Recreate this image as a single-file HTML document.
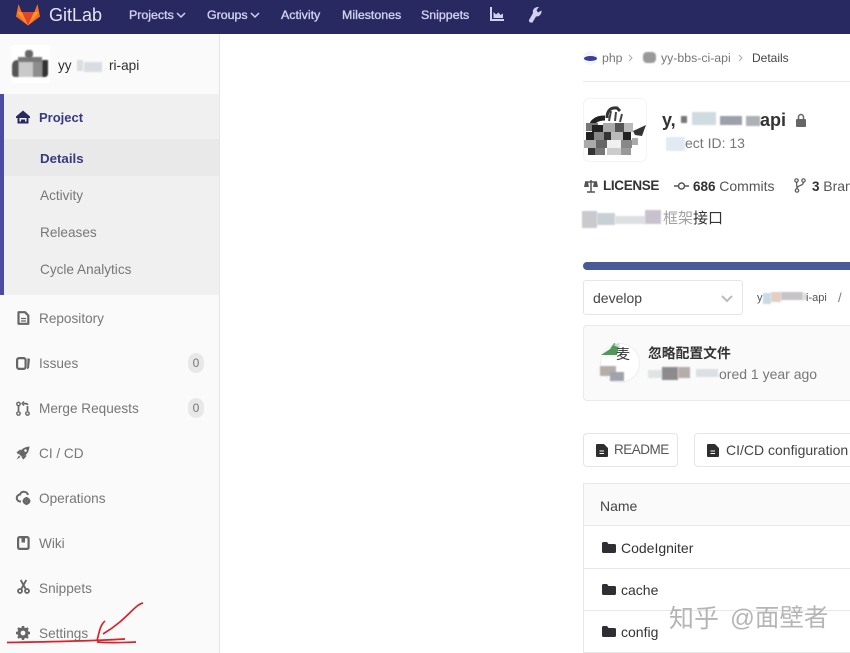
<!DOCTYPE html>
<html><head><meta charset="utf-8"><style>
html,body{margin:0;padding:0;background:#fff}
body{width:850px;height:653px;overflow:hidden;position:relative;font-family:"Liberation Sans","Noto Sans CJK SC",sans-serif;color:#2e2e2e}
.t{position:absolute;white-space:nowrap;line-height:18px;font-size:13.6px}
.b{position:absolute}
.p{position:absolute;filter:blur(.8px)}
.s{color:#777;margin-top:1px}
.n{color:#d1d1f0;font-size:12.400px;top:6px;-webkit-text-stroke:.35px #d1d1f0}
svg{position:absolute;overflow:visible}
</style></head><body>
<div class="b" style="left:0;top:0;width:850px;height:34px;background:#292961"></div>
<svg style="left:15px;top:2px" width="26" height="24" viewBox="0 0 26 24"><path d="M13 23.500 L1 14.500 L3.500 2 L7 11 H19 L22.500 2 L25 14.500Z" fill="#fc6d26"/><path d="M13 23.500L7 10H19Z" fill="#e24329"/><path d="M13 23.500L7 10H2Z M13 23.500L19 10H24Z" fill="#fca326" opacity=".75"/></svg>
<div class="t" style="left:49px;top:5px;font-size:18px;line-height:20px;color:#e4e4f6">GitLab</div>
<div class="t n" style="left:129px">Projects</div>
<svg style="left:176px;top:11px" width="10" height="8"><path d="M1 2l4 4 4-4" fill="none" stroke="#d1d1f0" stroke-width="1.500"/></svg>
<div class="t n" style="left:207px">Groups</div>
<svg style="left:250px;top:11px" width="10" height="8"><path d="M1 2l4 4 4-4" fill="none" stroke="#d1d1f0" stroke-width="1.500"/></svg>
<div class="t n" style="left:281px">Activity</div>
<div class="t n" style="left:342px">Milestones</div>
<div class="t n" style="left:421px">Snippets</div>
<svg style="left:490px;top:7px" width="14" height="14"><path d="M1 0V13H14" fill="none" stroke="#d1d1f0" stroke-width="2"/><path d="M3.500 11V5L6 7.500 8.500 5.500 10.500 8 13 6.500V11Z" fill="#d1d1f0"/></svg>
<svg style="left:528px;top:6px" width="14" height="17"><path d="M1 14L5 7C4 3.500 7 .5 11 1L8.500 4 10 6.500 13.500 4.500C14 8 11 11 8 10.500L4.500 16.500Q3 17 1.500 16Q.5 15 1 14Z" fill="#d1d1f0"/></svg>

<div class="b" style="left:0;top:34px;width:219px;height:619px;background:#fafafa;border-right:1px solid #e5e5e5"></div>
<div class="b" style="left:0;top:94px;width:219px;height:201px;background:#f0f0f0"></div>
<div class="b" style="left:0;top:94px;width:4px;height:201px;background:#4b4ba3"></div>
<div class="b" style="left:4px;top:139px;width:215px;height:37px;background:#e9e9e9"></div>

<div class="b" style="left:11px;top:45px;width:39px;height:38px;background:#fff;border-radius:3px"></div>
<div class="p" style="left:12px;top:60px;width:36px;height:17px;border-radius:5px 0 3px 3px;background:linear-gradient(90deg,#555 0 18%,#c9c9c9 18% 58%,#8d8d8d 58% 85%,#333 85%)"></div>
<div class="p" style="left:18px;top:57px;width:24px;height:5px;background:#777"></div>
<div class="p" style="left:25px;top:50px;width:8px;height:8px;background:#666;border-radius:3px"></div>
<div class="t" style="left:58px;top:57px;color:#2e2e2e">yy</div>
<div class="p" style="left:77px;top:60px;width:6px;height:11px;background:#ddd"></div>
<div class="p" style="left:84px;top:62px;width:18px;height:10px;background:#d8dde2"></div>
<div class="t" style="left:109px;top:57px;color:#2e2e2e">ri-api</div>

<svg style="left:16px;top:110px" width="14" height="14"><path d="M7 .5L0 6.500V8H14V6.500Z" fill="#292961"/><path d="M2.500 7V12.500H11.500V7" fill="none" stroke="#292961" stroke-width="2"/><rect x="5" y="9.500" width="4" height="2" fill="#292961"/></svg>
<div class="t" style="left:39px;top:109px;font-weight:bold;font-size:13px;color:#393982">Project</div>
<div class="t" style="left:40px;top:150px;font-weight:bold;font-size:13.300px;color:#393982">Details</div>
<div class="t s" style="left:40px;top:186px">Activity</div>
<div class="t s" style="left:40px;top:223px">Releases</div>
<div class="t s" style="left:40px;top:260px">Cycle Analytics</div>

<svg style="left:17px;top:311px" width="13" height="14"><path d="M1.500 1.200H8L11.300 4.500V12.800H1.500Z" fill="none" stroke="#666" stroke-width="2.200" stroke-linejoin="round"/><path d="M4 7.500h5M4 10h5" stroke="#666" stroke-width="1.300"/></svg>
<div class="t s" style="left:39px;top:309px">Repository</div>
<svg style="left:16px;top:357px" width="14" height="13"><rect x="1.100" y="1.100" width="8.500" height="10.800" rx="2" fill="none" stroke="#666" stroke-width="2.200"/><path d="M11.500 1L14 2 13 11 11 12.500Z" fill="#666"/></svg>
<div class="t s" style="left:39px;top:354px">Issues</div>
<div class="b" style="left:188px;top:353px;width:16px;height:20px;border-radius:8px;background:#e8e8e8;color:#777;font-size:12px;line-height:20px;text-align:center">0</div>
<svg style="left:16px;top:401px" width="14" height="15"><path d="M2.500 5V10M11.500 5V10M11.500 4C11.500 2.500 10 2.500 7.500 2.500" fill="none" stroke="#666" stroke-width="1.700"/><path d="M8 .5L6 2.500 8 4.500" fill="none" stroke="#666" stroke-width="1.300"/><circle cx="2.500" cy="3" r="1.700" fill="none" stroke="#666" stroke-width="1.400"/><circle cx="2.500" cy="12.500" r="1.700" fill="none" stroke="#666" stroke-width="1.400"/><circle cx="11.500" cy="12.500" r="1.700" fill="none" stroke="#666" stroke-width="1.400"/></svg>
<div class="t s" style="left:39px;top:399px">Merge Requests</div>
<div class="b" style="left:188px;top:398px;width:16px;height:20px;border-radius:8px;background:#e8e8e8;color:#777;font-size:12px;line-height:20px;text-align:center">0</div>
<svg style="left:16px;top:446px" width="14" height="14"><path d="M13.500 .5C8 1 4.500 3.500 3 8L6 11C10.500 9.500 13 6 13.500 .5Z" fill="#666"/><circle cx="9.500" cy="4.500" r="1.300" fill="#fafafa"/><path d="M.5 6.500L4 3.500 5 4 2.500 8.500ZM7.500 13.500L10.500 10 10 9 5.500 11.500ZM.5 13.500L3 9.500 4.500 11Z" fill="#666"/></svg>
<div class="t s" style="left:39px;top:444px">CI / CD</div>
<svg style="left:16px;top:491px" width="15" height="15"><path d="M5 10.500H4.500A3.500 3.500 0 0 1 4 3.500 4.200 4.200 0 0 1 12 4" fill="none" stroke="#666" stroke-width="2"/><circle cx="10.500" cy="10" r="2.600" fill="none" stroke="#666" stroke-width="2.400"/><path d="M10.500 6V14M6.500 10H14.500" stroke="#666" stroke-width="1.500"/></svg>
<div class="t s" style="left:39px;top:489px">Operations</div>
<svg style="left:17px;top:536px" width="13" height="14"><rect x="1.100" y="1.100" width="10.500" height="11.800" rx="1.500" fill="none" stroke="#666" stroke-width="2.200"/><rect x="4.500" y="1" width="3.500" height="5.500" fill="#666"/></svg>
<div class="t s" style="left:39px;top:534px">Wiki</div>
<svg style="left:17px;top:580px" width="13" height="14"><circle cx="3" cy="11" r="2" fill="none" stroke="#666" stroke-width="1.800"/><circle cx="10" cy="11" r="2" fill="none" stroke="#666" stroke-width="1.800"/><path d="M4 9.500L9.300 0M9 9.500L3.700 0" stroke="#666" stroke-width="1.800"/></svg>
<div class="t s" style="left:39px;top:579px">Snippets</div>
<svg style="left:16px;top:626px" width="14" height="14"><circle cx="7" cy="7" r="4" fill="none" stroke="#666" stroke-width="3.200"/><path d="M7 0V3M7 11V14M0 7H3M11 7H14M2 2L4 4M10 10L12 12M12 2L10 4M2 12L4 10" stroke="#666" stroke-width="2.400"/></svg>
<div class="t s" style="left:39px;top:624px">Settings</div>
<svg style="left:0;top:595px" width="150" height="58"><path d="M7 47.500C40 47 90 46 125 44M97 47C108 48 125 47.500 136 47M105 26C100 30 99 38 97 46M143 8C134 10 128 24 103 39" fill="none" stroke="#d8232a" stroke-width="1.700"/></svg>

<div class="b" style="left:583px;top:51px;width:14px;height:14px;border-radius:50%;background:#f6f6f6"></div>
<div class="b" style="left:584px;top:56px;width:13px;height:5px;border-radius:50%;background:#3c3ca0"></div>
<div class="t" style="left:602px;top:49px;font-size:12.300px;color:#777">php</div>
<svg style="left:628px;top:54px" width="6" height="9"><path d="M1 1l3 3-3 3" fill="none" stroke="#aaa"/></svg>
<div class="p" style="left:643px;top:52px;width:13px;height:11px;border-radius:4px;background:#999"></div>
<div class="t" style="left:661px;top:49px;font-size:12.300px;color:#777">yy-bbs-ci-api</div>
<svg style="left:738px;top:54px" width="6" height="9"><path d="M1 1l3 3-3 3" fill="none" stroke="#aaa"/></svg>
<div class="t" style="left:752px;top:49px;font-size:12px;color:#444">Details</div>
<div class="b" style="left:583px;top:81px;width:267px;height:1px;background:#e8e8e8"></div>

<div class="b" style="left:583px;top:98px;width:64px;height:64px;background:#fff;border:1px solid #f4f4f4;border-radius:6px;box-sizing:border-box"></div>
<svg style="left:583px;top:105px" width="64" height="52"><path d="M8 22Q10 13 22 13" fill="none" stroke="#222" stroke-width="5"/><path d="M24 13Q24 2 34 3L37 6" fill="none" stroke="#333" stroke-width="3"/><path d="M26 16L28 6M32 16L33 7M37 17L39 9" fill="none" stroke="#444" stroke-width="2"/><g shape-rendering="crispEdges"><rect x="3" y="18" width="12" height="8" fill="#777"/><rect x="9" y="20" width="11" height="7" fill="#222"/><rect x="20" y="18" width="12" height="9" fill="#aaa"/><rect x="32" y="18" width="9" height="9" fill="#555"/><rect x="41" y="18" width="9" height="9" fill="#bbb"/><rect x="3" y="27" width="8" height="8" fill="#222"/><rect x="11" y="27" width="10" height="8" fill="#888"/><rect x="21" y="27" width="7" height="8" fill="#333"/><rect x="28" y="27" width="12" height="8" fill="#bbb"/><rect x="40" y="27" width="8" height="8" fill="#222"/><rect x="1" y="35" width="12" height="8" fill="#aaa"/><rect x="13" y="35" width="11" height="8" fill="#666"/><rect x="24" y="35" width="14" height="8" fill="#f0f0f0"/><rect x="38" y="35" width="11" height="8" fill="#888"/><rect x="49" y="33" width="6" height="7" fill="#aaa"/><rect x="5" y="43" width="7" height="7" fill="#333"/><rect x="12" y="43" width="10" height="7" fill="#777"/><rect x="24" y="43" width="14" height="7" fill="#ccc"/><rect x="38" y="43" width="10" height="7" fill="#999"/></g><path d="M50 26L63 20 59 31 52 30Z" fill="#333"/></svg>

<div class="t" style="left:662px;top:109px;font-size:18px;line-height:22px;font-weight:bold;color:#333">y,</div>
<div class="p" style="left:681px;top:116px;width:6px;height:7px;background:#777"></div>
<div class="p" style="left:692px;top:112px;width:24px;height:13px;background:#cfdbe0"></div>
<div class="p" style="left:720px;top:116px;width:22px;height:9px;background:#9aa1aa"></div>
<div class="p" style="left:746px;top:116px;width:14px;height:10px;background:#adb0b4"></div>
<div class="t" style="left:760px;top:109px;font-size:18px;line-height:22px;font-weight:bold;color:#333">api</div>
<svg style="left:795px;top:113px" width="12" height="14"><rect x="1" y="6" width="10" height="8" rx="1" fill="#666"/><path d="M3.500 6V4a2.500 2.500 0 0 1 5 0V6" fill="none" stroke="#666" stroke-width="1.500"/></svg>
<div class="p" style="left:666px;top:137px;width:19px;height:14px;background:#e3e9f3"></div>
<div class="t" style="left:685px;top:134px;font-size:14px;color:#777">ect ID: 13</div>

<svg style="left:584px;top:179px" width="14" height="14"><path d="M7 1V13M3 13H11M1 3H13" stroke="#555" stroke-width="1.500"/><path d="M1 3L0 8H5L4 3ZM10 3L9 8H14L13 3Z" fill="#555"/></svg>
<div class="t" style="left:603px;top:177px;font-weight:bold;font-size:13.500px;letter-spacing:-.35px;color:#333">LICENSE</div>
<svg style="left:674px;top:180px" width="15" height="12"><circle cx="7.500" cy="6" r="3" fill="none" stroke="#555" stroke-width="1.500"/><path d="M0 6H4M11 6H15" stroke="#555" stroke-width="1.500"/></svg>
<div class="t" style="left:693px;top:177px;font-weight:bold;color:#333;font-size:13.500px">686 <span style="font-weight:normal;color:#555;font-size:14px">Commits</span></div>
<svg style="left:794px;top:178px" width="12" height="15"><circle cx="2.500" cy="2.500" r="1.700" fill="none" stroke="#555" stroke-width="1.200"/><circle cx="9.500" cy="2.500" r="1.700" fill="none" stroke="#555" stroke-width="1.200"/><circle cx="3" cy="12.500" r="1.700" fill="none" stroke="#555" stroke-width="1.200"/><path d="M2.500 4L3 11M9.500 4C9.500 8 4 7 3 10" fill="none" stroke="#555" stroke-width="1.200"/></svg>
<div class="t" style="left:812px;top:177px;font-weight:bold;color:#333;font-size:13.500px">3 <span style="font-weight:normal;color:#555;font-size:14px">Bran</span></div>

<div class="p" style="left:582px;top:211px;width:15px;height:17px;background:#c9c9ce"></div>
<div class="p" style="left:597px;top:213px;width:18px;height:12px;background:#c8d0d6"></div>
<div class="p" style="left:615px;top:216px;width:30px;height:8px;background:#dde0e3"></div>
<div class="p" style="left:645px;top:210px;width:16px;height:14px;background:#c9c2ce"></div>
<div class="t" style="left:663px;top:210px;font-size:15px;color:#555"><span style="opacity:.55">框架</span><span style="color:#333">接口</span></div>

<div class="b" style="left:583px;top:262px;width:267px;height:8px;border-radius:4px 0 0 4px;background:#4a5a96"></div>

<div class="b" style="left:583px;top:280px;width:160px;height:35px;border:1px solid #e5e5e5;border-radius:3px;box-sizing:border-box"></div>
<div class="t" style="left:593px;top:289px;color:#444;font-size:14px">develop</div>
<svg style="left:720px;top:294px" width="14" height="9"><path d="M2 2l5 5 5-5" fill="none" stroke="#bbb" stroke-width="2"/></svg>
<div class="t" style="left:757px;top:289px;font-size:11px;color:#555">y</div>
<div class="p" style="left:763px;top:293px;width:8px;height:11px;background:#c6dbe4"></div>
<div class="p" style="left:771px;top:292px;width:10px;height:10px;background:#e2cfc2"></div>
<div class="p" style="left:781px;top:292px;width:22px;height:8px;background:#c6c3c6"></div>
<div class="p" style="left:803px;top:293px;width:4px;height:7px;background:#ddd"></div>
<div class="t" style="left:806px;top:289px;font-size:11px;color:#555">i-api</div>
<div class="t" style="left:838px;top:289px;font-size:13px;color:#777">/</div>

<div class="b" style="left:583px;top:325px;width:280px;height:76px;background:#fafafa;border:1px solid #eaeaea;border-radius:4px;box-sizing:border-box"></div>
<div class="b" style="left:600px;top:343px;width:40px;height:40px;background:#fff;border-radius:50%;box-shadow:inset 0 0 0 1px #eee"></div>
<svg style="left:600px;top:342px" width="22" height="14"><path d="M1 13L10 7 14 1 19 4 17 13Z" fill="#4f9a58"/><path d="M13 3L19 1 20 6Z" fill="#c9d9e5"/></svg>
<div class="t" style="left:616px;top:345px;font-size:14px;color:#333">麦</div>
<div class="p" style="left:600px;top:366px;width:16px;height:10px;background:#b5adaa"></div>
<div class="p" style="left:610px;top:372px;width:14px;height:9px;background:#a0a2ad"></div>
<div class="t" style="left:648px;top:345px;font-size:13.800px;font-weight:bold;color:#333">忽略配置文件</div>
<div class="p" style="left:648px;top:370px;width:14px;height:8px;background:#dfe3e6"></div>
<div class="p" style="left:662px;top:367px;width:16px;height:13px;background:#8d8a8d"></div>
<div class="p" style="left:678px;top:367px;width:12px;height:11px;background:#b6aca8"></div>
<div class="p" style="left:696px;top:369px;width:22px;height:8px;background:#dcdfe3"></div>
<div class="t" style="left:719px;top:365px;font-size:14px;color:#777">ored 1 year ago</div>

<div class="b" style="left:583px;top:433px;width:95px;height:34px;border:1px solid #e5e5e5;border-radius:4px;box-sizing:border-box"></div>
<svg style="left:596px;top:444px" width="12" height="13"><path d="M1 1H7.500L11 4.500V12H1Z" fill="#2e2e2e" stroke="#2e2e2e" stroke-width="2" stroke-linejoin="round"/><path d="M3.500 7H8M3.500 9.500H8" stroke="#fff"/></svg>
<div class="t" style="left:614px;top:441px;color:#555;font-size:13.500px;letter-spacing:-.5px">README</div>
<div class="b" style="left:694px;top:433px;width:170px;height:34px;border:1px solid #e5e5e5;border-radius:4px;box-sizing:border-box"></div>
<svg style="left:707px;top:444px" width="12" height="13"><path d="M1 1H7.500L11 4.500V12H1Z" fill="#2e2e2e" stroke="#2e2e2e" stroke-width="2" stroke-linejoin="round"/><path d="M3.500 7H8M3.500 9.500H8" stroke="#fff"/></svg>
<div class="t" style="left:726px;top:441px;color:#444;font-size:14px">CI/CD configuration</div>

<div class="b" style="left:583px;top:483px;width:280px;height:43px;background:#fafafa;border:1px solid #e8e8e8;border-radius:3px 0 0 0;box-sizing:border-box"></div>
<div class="b" style="left:583px;top:483px;width:1px;height:170px;background:#e8e8e8"></div>
<div class="b" style="left:583px;top:568px;width:267px;height:1px;background:#e8e8e8"></div>
<div class="b" style="left:583px;top:610px;width:267px;height:1px;background:#e8e8e8"></div>
<div class="b" style="left:583px;top:652px;width:267px;height:1px;background:#e8e8e8"></div>
<div class="t" style="left:600px;top:497px;color:#444;font-size:14px">Name</div>
<svg style="left:602px;top:542px" width="14" height="11"><path d="M0 1.500Q0 0 1.500 0H5L6.500 2H12.500Q14 2 14 3.500V9.500Q14 11 12.500 11H1.500Q0 11 0 9.500Z" fill="#2e2e33"/></svg>
<div class="t" style="left:621px;top:539px;color:#333;font-size:14px">CodeIgniter</div>
<svg style="left:602px;top:584px" width="14" height="11"><path d="M0 1.500Q0 0 1.500 0H5L6.500 2H12.500Q14 2 14 3.500V9.500Q14 11 12.500 11H1.500Q0 11 0 9.500Z" fill="#2e2e33"/></svg>
<div class="t" style="left:621px;top:581px;color:#333;font-size:14px">cache</div>
<svg style="left:602px;top:626px" width="14" height="11"><path d="M0 1.500Q0 0 1.500 0H5L6.500 2H12.500Q14 2 14 3.500V9.500Q14 11 12.500 11H1.500Q0 11 0 9.500Z" fill="#2e2e33"/></svg>
<div class="t" style="left:621px;top:623px;color:#333;font-size:14px">config</div>
<div class="t" style="left:669px;top:604px;font-size:25px;line-height:30px;color:#b5b5b5">知乎</div>
<div class="t" style="left:730px;top:604px;font-size:24.500px;line-height:30px;color:#b5b5b5">@面壁者</div>
</body></html>
